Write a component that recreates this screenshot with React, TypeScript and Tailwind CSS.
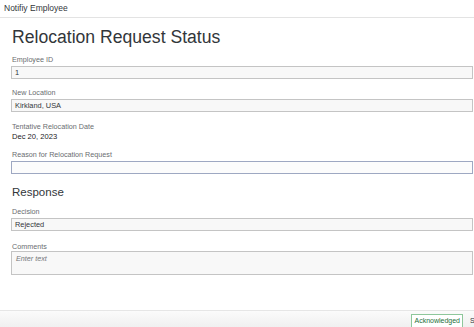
import React from "react";

const font = { fontFamily: '"Liberation Sans", Arial, sans-serif' };

function Label({ text, mt }: { text: string; mt: string }) {
  return (
    <div className={`${mt} ml-px h-[9px] text-[7.2px] leading-[9px] text-[#6a6d70] whitespace-nowrap`}>
      {text}
    </div>
  );
}

function Field({ value, focus }: { value?: string; focus?: boolean }) {
  return (
    <div
      className={`mt-[2px] h-[13px] box-border border ${
        focus ? "border-[#9ea8c2] border-[1.5px] bg-[#fcfcfc]" : "border-[#c4c4c4] bg-[#f8f8f8]"
      } pl-[3px] text-[7.4px] leading-[11px] text-[#32363a] whitespace-nowrap`}
    >
      {value}
    </div>
  );
}

export default function App() {
  return (
    <div style={font} className="relative w-[474px] h-[327px] overflow-hidden bg-white">
      <div className="h-[18px] border-b border-[#e3e3e3] pl-[4px] text-[8.5px] leading-[17px] text-[#32363a]">
        Notifiy Employee
      </div>
      <div className="pl-[11px] pr-[1px] flex flex-col">
        <div className="mt-[10px] ml-px h-[18px] text-[17.6px] leading-[18px] text-[#32363a] whitespace-nowrap">
          Relocation Request Status
        </div>
        <Label text="Employee ID" mt="mt-[9px]" />
        <Field value="1" />
        <Label text="New Location" mt="mt-[9px]" />
        <Field value="Kirkland, USA" />
        <Label text="Tentative Relocation Date" mt="mt-[10px]" />
        <div className="mt-px ml-px h-[9px] text-[7.6px] leading-[9px] text-[#1d2125] whitespace-nowrap">
          Dec 20, 2023
        </div>
        <Label text="Reason for Relocation Request" mt="mt-[9px]" />
        <Field focus />
        <div className="mt-[11px] ml-px h-[14px] text-[11.5px] leading-[14px] text-[#32363a] whitespace-nowrap">
          Response
        </div>
        <Label text="Decision" mt="mt-[8px]" />
        <Field value="Rejected" />
        <Label text="Comments" mt="mt-[11px]" />
        <div className="h-[24px] box-border border border-[#c4c4c4] bg-[#f8f8f8] pl-[4px] pt-[2px] text-[7.2px] leading-[9px] italic text-[#74777a] whitespace-nowrap">
          Enter text
        </div>
      </div>
      <div className="absolute left-0 right-0 top-[310px] h-[17px] border-t border-[#e6e6e6] bg-gradient-to-b from-[#fbfbfb] to-[#f0f0f0] flex items-start justify-end pt-[3px]">
        <div className="mr-[7px] h-[14px] box-border border border-[#8ec79b] bg-white px-[2px] text-[7px] leading-[12px] text-[#256f3a] whitespace-nowrap">
          Acknowledged
        </div>
        <div className="w-[4px] overflow-hidden text-[7px] leading-[13px] text-[#32363a] whitespace-nowrap">
          S
        </div>
      </div>
    </div>
  );
}
